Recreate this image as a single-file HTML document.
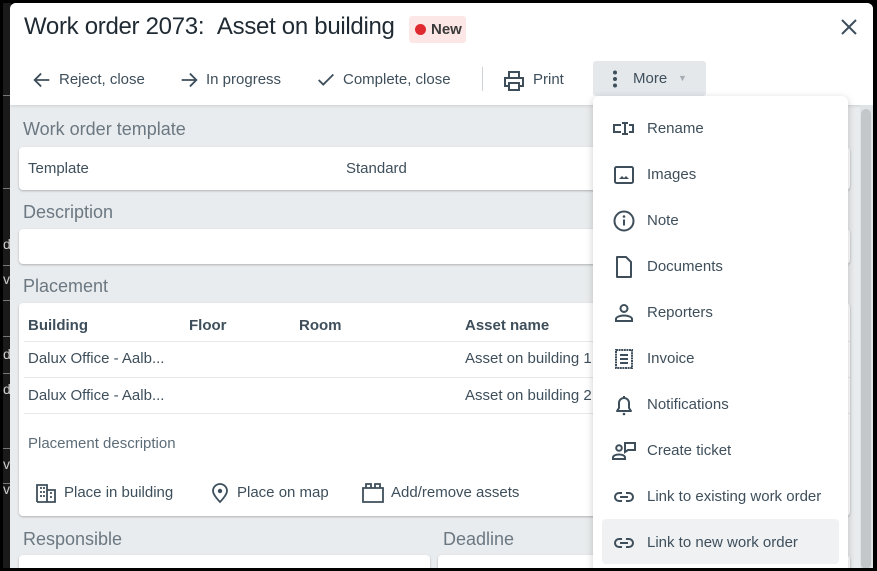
<!DOCTYPE html>
<html><head><meta charset="utf-8">
<style>
*{box-sizing:border-box;margin:0;padding:0}
body{width:877px;height:571px;overflow:hidden;background:#000;font-family:"Liberation Sans",sans-serif;color:#3e4f5b;position:relative}
.bgstrip{position:absolute;left:3px;top:3px;width:8px;height:565px;background:#1a1a1a}
.bgstrip i{position:absolute;left:0;width:8px;height:1px;background:#777}
.bgstrip span{position:absolute;left:0;font-size:14px;color:#ccc}
.modal{position:absolute;left:10px;top:3px;width:863px;height:565px;background:#e9ecee;overflow:hidden;border-radius:6px 6px 0 0}
.head{position:absolute;left:0;top:0;width:863px;height:102px;background:#fff;box-shadow:0 1px 3px rgba(0,0,0,.12)}
.title{position:absolute;left:14px;top:10px;font-size:24px;color:#1f2a33;letter-spacing:-0.3px}
.badge{position:absolute;left:399px;top:13px;width:57px;height:27px;background:#fde6e6;border-radius:3px;font-size:15px;font-weight:bold;color:#3a3a3a;padding:5px 0 0 22px}
.badge:before{content:"";position:absolute;left:6px;top:8px;width:11px;height:11px;border-radius:50%;background:#e02a30}
.close{position:absolute;left:829px;top:14px}
.tb{position:absolute;top:68px;font-size:15px;color:#3e4f5b}
.tb svg{position:absolute;left:-28px;top:-2px}
.sep{position:absolute;left:472px;top:64px;width:1px;height:24px;background:#ccd2d6}
.more{position:absolute;left:583px;top:58px;width:113px;height:35px;background:#e4e8eb;border-radius:3px}
.h{position:absolute;left:13px;font-size:18px;color:#6b7882}
.card{position:absolute;background:#fff;border-radius:4px;box-shadow:0 1px 2px rgba(0,0,0,.25)}
.t{position:absolute;font-size:15px;color:#3e4f5b}
.b{font-weight:bold}
.line{position:absolute;left:5px;right:0;height:1px;background:#e6e9eb}
.scroll{position:absolute;left:850px;top:102px;width:13px;height:463px;background:#e0e3e5}
.scroll div{position:absolute;left:1px;top:4px;width:10px;height:460px;background:#c4c7c9;border-radius:5px}
.menu{position:absolute;left:583px;top:93px;width:255px;height:480px;background:#fff;border-radius:6px;box-shadow:0 2px 8px rgba(0,0,0,.2)}
.mi{position:absolute;left:0;width:255px;height:44px;font-size:15px;color:#3e4f5b}
.mi span{position:absolute;left:54px;top:14px}
.mi svg{position:absolute;left:19px;top:11px}
.hl{position:absolute;left:9px;top:423px;width:237px;height:45px;background:#eff1f3;border-radius:4px}
</style></head><body>
<div class="bgstrip"><i style="top:92px"></i><i style="top:185px"></i><i style="top:262px"></i><i style="top:297px"></i><i style="top:333px"></i><i style="top:370px"></i><i style="top:445px"></i><i style="top:480px"></i><span style="top:233px">d</span><span style="top:268px">v</span><span style="top:343px">d</span><span style="top:378px">d</span><span style="top:453px">v</span><span style="top:478px">v</span></div>
<div class="modal">
 <div class="head">
  <div class="title">Work order 2073: &nbsp;Asset on building</div>
  <div class="badge">New</div>
  <svg class="close" width="20" height="20" viewBox="0 0 20 20"><path d="M3 3L17 17M17 3L3 17" stroke="#3e4f5b" stroke-width="2"/></svg>
  <div class="tb" style="left:49px"><svg width="22" height="22" viewBox="0 0 24 24"><path d="M20 12H5M11 5l-7 7 7 7" fill="none" stroke="#3e4f5b" stroke-width="2"/></svg>Reject, close</div>
  <div class="tb" style="left:196px"><svg width="22" height="22" viewBox="0 0 24 24"><path d="M4 12h15M13 5l7 7-7 7" fill="none" stroke="#3e4f5b" stroke-width="2"/></svg>In progress</div>
  <div class="tb" style="left:333px"><svg width="22" height="22" viewBox="0 0 24 24"><path d="M4 12l5 5L20 6" fill="none" stroke="#3e4f5b" stroke-width="2"/></svg>Complete, close</div>
  <div class="sep"></div>
  <div class="tb" style="left:523px"><svg width="24" height="24" viewBox="0 0 24 24" style="left:-31px"><path d="M7 8V3h10v5M7 17H3v-8h18v8h-4M7 14h10v7H7z" fill="none" stroke="#3e4f5b" stroke-width="2"/></svg>Print</div>
  <div class="more">
   <svg style="position:absolute;left:19px;top:9px" width="6" height="18"><circle cx="3" cy="2.5" r="2" fill="#3e4f5b"/><circle cx="3" cy="9" r="2" fill="#3e4f5b"/><circle cx="3" cy="15.5" r="2" fill="#3e4f5b"/></svg>
   <span style="position:absolute;left:40px;top:9px;font-size:15px">More</span>
   <span style="position:absolute;left:85px;top:12px;font-size:9px;color:#a5adb3">▼</span>
  </div>
 </div>
 <div class="h" style="top:116px">Work order template</div>
 <div class="card" style="left:9px;top:144px;width:831px;height:43px"><div class="t" style="left:9px;top:13px">Template</div><div class="t" style="left:327px;top:13px">Standard</div></div>
 <div class="h" style="top:199px">Description</div>
 <div class="card" style="left:9px;top:226px;width:831px;height:35px"></div>
 <div class="h" style="top:273px">Placement</div>
 <div class="card" style="left:9px;top:300px;width:831px;height:213px">
  <div class="t b" style="left:9px;top:14px">Building</div><div class="t b" style="left:170px;top:14px">Floor</div><div class="t b" style="left:280px;top:14px">Room</div><div class="t b" style="left:446px;top:14px">Asset name</div>
  <div class="line" style="top:38px"></div>
  <div class="t" style="left:9px;top:47px">Dalux Office - Aalb...</div><div class="t" style="left:446px;top:47px">Asset on building 1</div>
  <div class="line" style="top:74px"></div>
  <div class="t" style="left:9px;top:84px">Dalux Office - Aalb...</div><div class="t" style="left:446px;top:84px">Asset on building 2</div>
  <div class="line" style="top:110px"></div>
  <div class="t" style="left:9px;top:132px;color:#5d6d78">Placement description</div>
  <svg style="position:absolute;left:16px;top:179px" width="22" height="22" viewBox="0 0 22 22"><path d="M2 20V3h10v17M12 8h8v12H2M5 6h2M5 10h2M5 14h2M8 6h2M8 10h2M8 14h2M15 11h2M15 15h2" fill="none" stroke="#3e4f5b" stroke-width="1.8"/></svg>
  <div class="t" style="left:45px;top:181px">Place in building</div>
  <svg style="position:absolute;left:191px;top:179px" width="20" height="22" viewBox="0 0 20 22"><path d="M10 20s-7-7-7-11a7 7 0 0114 0c0 4-7 11-7 11z" fill="none" stroke="#3e4f5b" stroke-width="1.8"/><circle cx="10" cy="9" r="2.2" fill="#3e4f5b"/></svg>
  <div class="t" style="left:218px;top:181px">Place on map</div>
  <svg style="position:absolute;left:342px;top:179px" width="24" height="22" viewBox="0 0 24 22"><path d="M2 6h20v14H2zM5 6V2h5v4M14 6V2h5v4" fill="none" stroke="#3e4f5b" stroke-width="1.8"/></svg>
  <div class="t" style="left:372px;top:181px">Add/remove assets</div>
 </div>
 <div class="h" style="top:526px">Responsible</div>
 <div class="h" style="top:526px;left:433px">Deadline</div>
 <div class="card" style="left:9px;top:552px;width:411px;height:30px"></div>
 <div class="card" style="left:428px;top:552px;width:412px;height:30px"></div>
 <div class="scroll"><div></div></div>
 <div class="menu">
  <div class="hl"></div>
  <div class="mi" style="top:10px"><svg width="24" height="24" viewBox="0 0 24 24"><path d="M9 8H2v7h7M13 6v11M10 6h6M10 17h6M17 8h4v7h-4" fill="none" stroke="#3e4f5b" stroke-width="2"/></svg><span>Rename</span></div>
  <div class="mi" style="top:56px"><svg width="24" height="24" viewBox="0 0 24 24"><rect x="3" y="4" width="18" height="16" rx="1.5" fill="none" stroke="#3e4f5b" stroke-width="2"/><path d="M7 16l3-3 2 2 2-2 3 3z" fill="#3e4f5b"/></svg><span>Images</span></div>
  <div class="mi" style="top:102px"><svg width="24" height="24" viewBox="0 0 24 24"><circle cx="12" cy="12" r="9.5" fill="none" stroke="#3e4f5b" stroke-width="2"/><path d="M12 10.5v6" stroke="#3e4f5b" stroke-width="2"/><circle cx="12" cy="7.5" r="1.3" fill="#3e4f5b"/></svg><span>Note</span></div>
  <div class="mi" style="top:148px"><svg width="24" height="24" viewBox="0 0 24 24"><path d="M5 2h9l5 5v15H5z" fill="none" stroke="#3e4f5b" stroke-width="2" stroke-linejoin="round"/></svg><span>Documents</span></div>
  <div class="mi" style="top:194px"><svg width="24" height="24" viewBox="0 0 24 24"><circle cx="12" cy="7.5" r="3.5" fill="none" stroke="#3e4f5b" stroke-width="2"/><path d="M4 20v-2c0-2 4-3.5 8-3.5s8 1.5 8 3.5v2z" fill="none" stroke="#3e4f5b" stroke-width="2"/></svg><span>Reporters</span></div>
  <div class="mi" style="top:240px"><svg width="24" height="24" viewBox="0 0 24 24"><rect x="4" y="3" width="16" height="18" fill="none" stroke="#3e4f5b" stroke-width="2" stroke-dasharray="2 0.6"/><path d="M8 8h8M8 12h8M8 16h8" stroke="#3e4f5b" stroke-width="2"/></svg><span>Invoice</span></div>
  <div class="mi" style="top:286px"><svg width="24" height="24" viewBox="0 0 24 24"><path d="M5 18h14l-2-3v-5a5 5 0 00-10 0v5z" fill="none" stroke="#3e4f5b" stroke-width="2" stroke-linejoin="round"/><circle cx="12" cy="21" r="1.3" fill="#3e4f5b"/><path d="M12 3v2" stroke="#3e4f5b" stroke-width="2"/></svg><span>Notifications</span></div>
  <div class="mi" style="top:332px"><svg width="26" height="24" viewBox="0 0 26 24"><circle cx="7" cy="9" r="2.8" fill="none" stroke="#3e4f5b" stroke-width="2"/><path d="M1 20v-1.5c0-2 3-3 6-3s6 1 6 3V20z" fill="none" stroke="#3e4f5b" stroke-width="2"/><path d="M13 4h10v7h-7l-3 2z" fill="none" stroke="#3e4f5b" stroke-width="2"/></svg><span>Create ticket</span></div>
  <div class="mi" style="top:378px"><svg width="24" height="24" viewBox="0 0 24 24"><path d="M10 8H7a4 4 0 000 8h3M14 8h3a4 4 0 010 8h-3M8 12h8" fill="none" stroke="#3e4f5b" stroke-width="2"/></svg><span>Link to existing work order</span></div>
  <div class="mi" style="top:424px"><svg width="24" height="24" viewBox="0 0 24 24"><path d="M10 8H7a4 4 0 000 8h3M14 8h3a4 4 0 010 8h-3M8 12h8" fill="none" stroke="#3e4f5b" stroke-width="2"/></svg><span>Link to new work order</span></div>
 </div>
</div>
</body></html>
